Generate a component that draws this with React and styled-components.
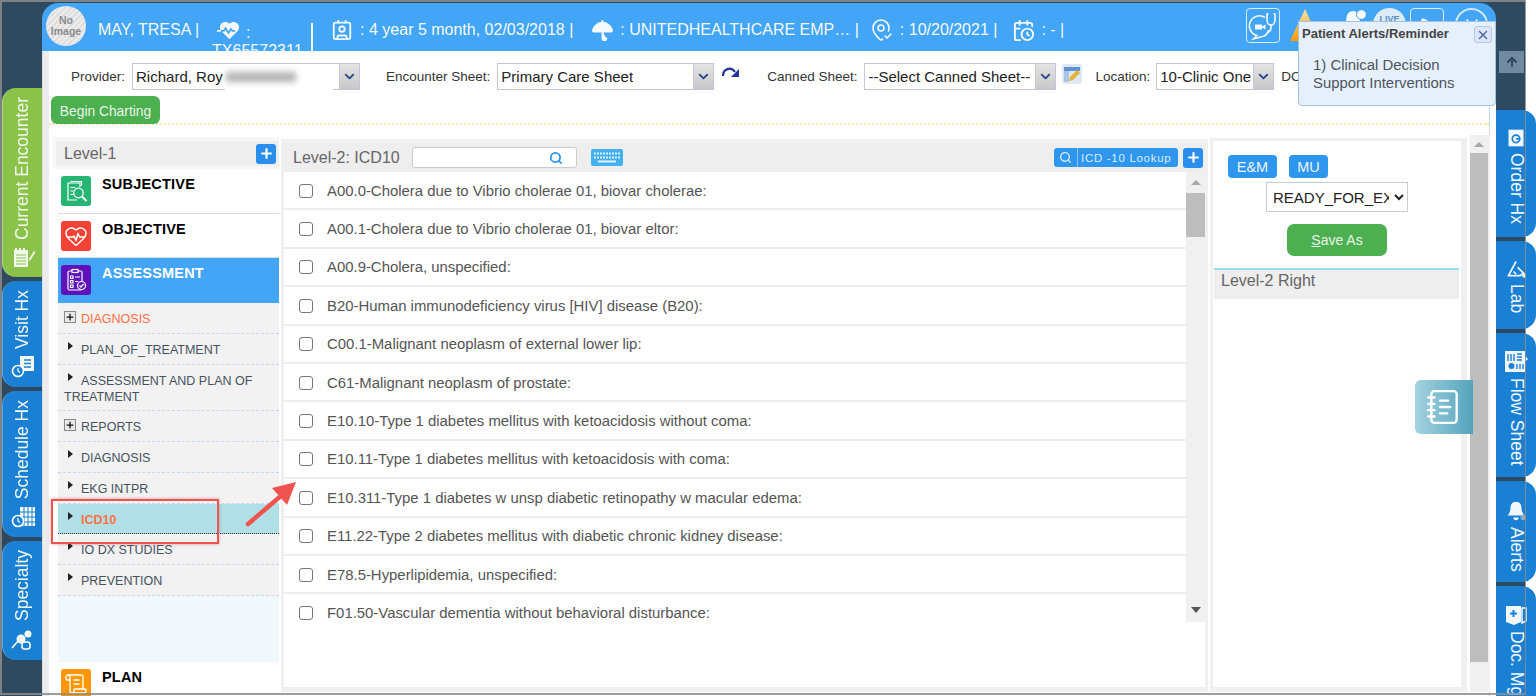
import React from 'react';
import styled, { createGlobalStyle } from 'styled-components';
import {
  HeartPulse, Umbrella, MapPinCheck, CalendarClock, Bell, Play, X, Search, Plus,
  ArrowUp, ChevronDown, ScrollText, Contact, NotebookText,
} from 'lucide-react';

const GlobalStyle = createGlobalStyle`
  html, body { margin: 0; padding: 0; height: 100%; overflow: hidden; background: #fff; }
  * { box-sizing: border-box; }
  body { font-family: "Liberation Sans", Arial, sans-serif; }
`;

const Page = styled.div`
  position: relative;
  display: flex;
  width: 1536px;
  height: 696px;
  overflow: hidden;
  background: linear-gradient(to right, #2e4a60 1525px, #fff 1525px);
`;

const Frame = styled.div`
  position: absolute;
  left: 0;
  top: 0;
  width: 1526px;
  height: 695px;
  border: 2px solid rgba(140, 140, 140, 0.85);
  border-right-width: 1px;
  pointer-events: none;
  z-index: 20;
`;

const LeftRail = styled.nav`
  width: 42px;
  flex: none;
  padding: 88px 0 0 2px;
  display: flex;
  flex-direction: column;
  gap: 4px;
`;

const LeftTab = styled.div`
  height: ${(p) => p.$h}px;
  display: flex;
  flex-direction: column;
  align-items: center;
  justify-content: center;
  gap: 5px;
  color: #f2f8ee;
  background: ${(p) => (p.$active ? '#8bc34a' : '#1a80d4')};
  border-radius: 14px 0 0 14px;
  border-left: 1px solid rgba(255, 255, 255, 0.3);
`;

const LeftLabel = styled.span`
  writing-mode: vertical-rl;
  transform: rotate(180deg);
  font-size: 17.5px;
  white-space: nowrap;
`;

const Main = styled.div`
  position: relative;
  width: 1454px;
  flex: none;
  margin-top: 3px;
  display: flex;
  flex-direction: column;
`;

const Header = styled.header`
  height: 48px;
  flex: none;
  display: flex;
  align-items: flex-start;
  padding: 3px 8px 0 4px;
  background: #42a5f5;
  color: #f4faff;
  border-radius: 16px 16px 0 0;
  overflow: hidden;
  font-size: 16px;
`;

const Avatar = styled.div`
  width: 40px;
  height: 40px;
  flex: none;
  border-radius: 50%;
  display: flex;
  align-items: center;
  justify-content: center;
  text-align: center;
  font-size: 10.5px;
  line-height: 11px;
  font-weight: bold;
  color: #8c8c8c;
  background: repeating-linear-gradient(135deg, #ececec 0 2px, #dedede 2px 4px);
`;

const HeaderText = styled.span`
  margin-left: ${(p) => p.$ml || 0}px;
  padding-top: 15px;
  line-height: 18px;
  white-space: nowrap;
`;

const HeaderIcon = styled.span`
  margin-left: ${(p) => p.$ml || 0}px;
  padding-top: ${(p) => p.$pt || 13}px;
  height: 40px;
  display: flex;
  flex: none;
`;

const PatientId = styled.span`
  width: 98px;
  margin-left: ${(p) => p.$ml}px;
  padding-top: 18px;
  line-height: 18px;
  flex: none;
`;

const IdColon = styled.span`
  margin-left: 34px;
`;

const TallBar = styled.span`
  width: 2px;
  height: 34px;
  margin: 17px 0 0 ${(p) => p.$ml}px;
  background: #f4faff;
  flex: none;
`;

const HeaderTools = styled.div`
  margin-left: auto;
  display: flex;
  align-items: flex-start;
`;

const ToolBox = styled.span`
  width: 34px;
  height: 35px;
  margin: 2px 0 0 ${(p) => p.$ml}px;
  display: flex;
  align-items: center;
  justify-content: center;
  flex: none;
  border: 1px solid #dceefd;
  border-radius: 4px;
`;

const ToolRound = styled.span`
  width: 33px;
  height: 33px;
  margin: 2px 0 0 ${(p) => p.$ml}px;
  display: flex;
  align-items: center;
  justify-content: center;
  flex: none;
  border-radius: 50%;
  border: 2px solid #cfe6fb;
`;

const LiveBadge = styled.span`
  width: 33px;
  height: 33px;
  margin: 2px 0 0 ${(p) => p.$ml}px;
  padding-top: 6px;
  flex: none;
  text-align: center;
  border-radius: 50%;
  font-size: 9px;
  line-height: 10px;
  font-weight: bold;
  color: #5b8fc0;
  background: #dcebf8;
`;

const BellGlyph = styled.span`
  position: relative;
  width: 23px;
  height: 24px;
  margin: 4px 0 0 22px;
  flex: none;
`;

const BellBadge = styled.span`
  position: absolute;
  right: -1px;
  top: 0;
  width: 9px;
  height: 9px;
  border-radius: 50%;
  background: #fff;
  outline: 1px solid #42a5f5;
`;

const Warning = styled.span`
  width: 30px;
  height: 32px;
  margin: 3px 0 0 10px;
  flex: none;
  clip-path: polygon(50% 0, 100% 100%, 0 100%);
  background: linear-gradient(#f5e3a8, #ff9800);
`;

const AlertPopup = styled.aside`
  position: absolute;
  left: 1256px;
  top: 18px;
  width: 198px;
  height: 85px;
  padding: 4px 3px;
  background: #e6f0fc;
  border: 1px solid #a6c2e2;
  border-radius: 0 0 4px 4px;
  color: #4d5560;
  z-index: 10;
`;

const PopupHead = styled.div`
  display: flex;
  align-items: flex-start;
  justify-content: space-between;
  font-size: 13px;
  font-weight: bold;
  color: #444;
  line-height: 15px;
`;

const PopupClose = styled.span`
  width: 18px;
  height: 17px;
  display: flex;
  align-items: center;
  justify-content: center;
  border: 1px solid #b5c8e6;
  border-radius: 3px;
  background: #dbe7f8;
  color: #5068a8;
`;

const PopupBody = styled.div`
  margin: 13px 0 0 11px;
  font-size: 14.9px;
  line-height: 18px;
`;

const UpButton = styled.span`
  position: absolute;
  left: 1457px;
  top: 48px;
  width: 25px;
  height: 22px;
  display: flex;
  align-items: center;
  justify-content: center;
  background: #728aa0;
  color: #2e4a60;
`;

const Body = styled.div`
  flex: 1;
  min-height: 0;
  display: flex;
  background: #fff;
`;

const Gutter = styled.div`
  width: 7px;
  flex: none;
  background: #ececec;
  border-left: 1px solid #ddd;
`;

const Workspace = styled.div`
  width: 1441px;
  flex: none;
  display: flex;
  flex-direction: column;
  border-right: 1px solid #c4d8ee;
`;

const Toolbar = styled.div`
  height: 74px;
  flex: none;
  padding: 0 0 0 2px;
  border-bottom: 2px dotted #fde6a6;
`;

const FilterRow = styled.div`
  display: flex;
  align-items: center;
  height: 27px;
  margin-top: 12px;
  margin-left: 20px;
`;

const FieldLabel = styled.label`
  font-size: 13.5px;
  color: #333;
  white-space: nowrap;
  margin-left: ${(p) => p.$ml || 0}px;
  margin-right: ${(p) => p.$mr || 7}px;
`;

const Combo = styled.div`
  position: relative;
  width: ${(p) => p.$w}px;
  height: 27px;
  flex: none;
  display: flex;
  align-items: center;
  justify-content: space-between;
  padding-left: 3px;
  font-size: 15px;
  color: #222;
  white-space: nowrap;
  border: 1px solid #c3c6d8;
  background: #fff;
`;

const ComboArrow = styled.span`
  width: 20px;
  height: 25px;
  flex: none;
  display: flex;
  align-items: center;
  justify-content: center;
  background: linear-gradient(#e4e4e4, #c8c8c8);
  border-left: 1px solid #c3c6d8;
  color: #26468c;
`;

const ComboValue = styled.span`
  overflow: hidden;
`;

const BlurMask = styled.span`
  position: absolute;
  left: 92px;
  top: 0;
  width: 108px;
  height: 34px;
  background: #fff;
`;

const BlurName = styled.span`
  display: block;
  width: 70px;
  height: 10px;
  margin: 8px 0 0 1px;
  background: #b4b4b4;
  filter: blur(3px);
`;

const ToolIcon = styled.span`
  display: flex;
  flex: none;
  margin: ${(p) => p.$mt}px 0 0 ${(p) => p.$ml}px;
`;

const BeginButton = styled.button`
  display: block;
  width: 109px;
  height: 28px;
  margin-top: 6px;
  padding: 2px 0 0;
  border: 0;
  border-radius: 6px;
  background: #4caf50;
  color: #e8f5e9;
  font: 13.8px "Liberation Sans", Arial, sans-serif;
`;

const PanelArea = styled.div`
  flex: 1;
  min-height: 0;
  display: flex;
`;

const Panels = styled.div`
  width: 1421px;
  flex: none;
  display: flex;
  padding: 12px 0 0 4px;
  overflow: hidden;
`;

const LevelOne = styled.section`
  width: 226px;
  flex: none;
  display: flex;
  flex-direction: column;
  overflow: hidden;
`;

const LevelOneHead = styled.div`
  height: 32px;
  flex: none;
  padding: 4px 0 3px 3px;
  background: #f6f6f6;
`;

const LevelOneBar = styled.div`
  height: 25px;
  display: flex;
  align-items: center;
  justify-content: space-between;
  padding: 0 3px 0 8px;
  background: #eee;
  font-size: 16px;
  color: #666;
`;

const PlusButton = styled.span`
  width: 20px;
  height: 20px;
  display: flex;
  align-items: center;
  justify-content: center;
  flex: none;
  margin-left: ${(p) => p.$ml || 0}px;
  border-radius: 3px;
  background: #2a8fec;
  color: #fff;
`;

const CategoryRow = styled.div`
  height: 44.5px;
  flex: none;
  display: flex;
  margin-left: 5px;
  padding: 7px 0 0 3px;
  font-size: 14.5px;
  font-weight: bold;
  letter-spacing: 0.2px;
  background: ${(p) => (p.$active ? '#42a5f5' : '#fff')};
  color: ${(p) => (p.$active ? '#fff' : '#000')};
  border-bottom: 1px solid ${(p) => (p.$active ? '#42a5f5' : '#ddd')};
`;

const CategoryTile = styled.span`
  width: 30px;
  height: 30px;
  flex: none;
  display: flex;
  align-items: center;
  justify-content: center;
  border-radius: 3px;
  color: #fff;
  background: ${(p) => p.$bg};
`;

const CategoryName = styled.span`
  margin-left: 11px;
`;

const SubList = styled.ul`
  list-style: none;
  margin: 0 0 0 5px;
  padding: 0;
  background: #f2f2f2;
`;

const SubItem = styled.li`
  min-height: ${(p) => (p.$selected ? 30 : 31)}px;
  padding: 8px 6px 5px;
  font-size: 12.5px;
  line-height: 16px;
  color: ${(p) => (p.$orange ? '#ff7043' : '#47525e')};
  font-weight: ${(p) => (p.$selected ? 'bold' : 'normal')};
  background: ${(p) => (p.$selected ? '#b0e0e6' : 'transparent')};
  border-bottom: 1px ${(p) => (p.$selected ? 'dotted #333' : 'dashed #c9d8ea')};
`;

const Caret = styled.span`
  display: inline-block;
  width: 0;
  height: 0;
  margin: 0 8px 4px 4px;
  border-top: 4px solid transparent;
  border-bottom: 4px solid transparent;
  border-left: 5px solid #222;
`;

const Expander = styled.span`
  display: inline-flex;
  align-items: center;
  justify-content: center;
  width: 12px;
  height: 12px;
  margin-right: 5px;
  vertical-align: 1px;
  border: 1px solid #888;
  background: #e8e8e8;
  color: #111;
`;

const SubFill = styled.div`
  height: 66px;
  flex: none;
  margin-left: 5px;
  background: #f0f8fb;
`;

const LevelTwo = styled.section`
  width: 927px;
  flex: none;
  margin: 2px 0 4px 2px;
  border: solid #f0f0f0;
  border-width: 4px 3px 5px;
  display: flex;
  flex-direction: column;
`;

const LevelTwoHead = styled.div`
  height: 29px;
  flex: none;
  display: flex;
  align-items: center;
  padding: 0 2px 0 9px;
  background: #eee;
  font-size: 16px;
  color: #666;
`;

const SearchField = styled.div`
  width: 165px;
  height: 21px;
  margin-left: 12px;
  display: flex;
  align-items: center;
  justify-content: flex-end;
  padding-right: 13px;
  background: #fff;
  border: 1px solid #ccc;
  border-radius: 3px;
  color: #2a96ee;
`;

const KeyboardChip = styled.span`
  display: flex;
  margin-left: 14px;
`;

const LookupButton = styled.div`
  width: 124px;
  height: 19px;
  margin-left: auto;
  display: flex;
  align-items: center;
  border-radius: 3px;
  background: #2f96ee;
  color: #d9edff;
  font-size: 11.5px;
  letter-spacing: 0.7px;
`;

const LookupIcon = styled.span`
  width: 24px;
  height: 19px;
  flex: none;
  display: flex;
  align-items: center;
  justify-content: center;
  border-right: 1px solid #8cc6f5;
  margin-right: 3px;
`;

const ListArea = styled.div`
  height: 450px;
  flex: none;
  display: flex;
`;

const CodeList = styled.div`
  flex: 1;
  min-width: 0;
  overflow: hidden;
`;

const CodeRow = styled.label`
  height: 38.4px;
  display: flex;
  align-items: center;
  padding: 1px 0 0 15px;
  font-size: 14.9px;
  color: #555;
  border-bottom: 2px solid #eee;
`;

const CodeBox = styled.span`
  width: 14px;
  height: 14px;
  flex: none;
  margin-right: 14px;
  border: 1px solid #767676;
  border-radius: 3px;
  background: #fff;
`;

const Track = styled.div`
  width: ${(p) => p.$w}px;
  flex: none;
  display: flex;
  flex-direction: column;
  align-items: center;
  background: #f0f0f0;
  margin-top: ${(p) => p.$mt || 0}px;
  margin-bottom: ${(p) => p.$mb || 0}px;
  padding-right: ${(p) => p.$pr || 0}px;
`;

const TrackArrow = styled.span`
  width: 0;
  height: 0;
  flex: none;
  margin: ${(p) => (p.$up ? '8px 0 8px' : 'auto 0 9px')};
  border-left: 5px solid transparent;
  border-right: 5px solid transparent;
  border-bottom: ${(p) => (p.$up ? '5px solid #a8a8a8' : '0')};
  border-top: ${(p) => (p.$up ? '0' : '6px solid #555')};
`;

const OuterArrow = styled(TrackArrow)`
  margin: 7px 0 6px;
`;

const Thumb = styled.span`
  width: 100%;
  height: ${(p) => p.$h}px;
  flex: none;
  background: #bdbdbd;
`;

const LevelRight = styled.section`
  width: 257px;
  flex: none;
  margin: 1px 0 4px 2px;
  border: solid #f0f0f0;
  border-width: 3px 6px 5px 3px;
  display: flex;
  flex-direction: column;
  background: #fff;
`;

const ChipRow = styled.div`
  display: flex;
  gap: 12px;
  padding: 14px 0 0 15px;
`;

const Chip = styled.span`
  width: ${(p) => p.$w}px;
  height: 23px;
  display: flex;
  align-items: center;
  justify-content: center;
  border-radius: 4px;
  background: #2f96ee;
  color: #eaf5ff;
  font-size: 14.5px;
`;

const StatusSelect = styled.select`
  display: block;
  width: 142px;
  height: 30px;
  margin: 4px 0 0 53px;
  padding: 0 2px;
  border: 1px solid #ccc;
  background: #fff;
  color: #222;
  font: 15px "Liberation Sans", Arial, sans-serif;
`;

const SaveButton = styled.button`
  display: block;
  width: 100px;
  height: 32px;
  margin: 12px 0 12px 74px;
  border: 0;
  border-radius: 7px;
  background: #4caf50;
  color: #e8f5e9;
  font: 14px "Liberation Sans", Arial, sans-serif;
`;

const RightHead = styled.div`
  height: 31px;
  width: 245px;
  margin-left: 1px;
  padding: 2px 0 0 7px;
  background: #eee;
  border-top: 2px solid #9fdfe6;
  font-size: 16px;
  color: #666;
`;

const NotesFlag = styled.span`
  position: absolute;
  left: 1415px;
  top: 380px;
  width: 58px;
  height: 54px;
  display: flex;
  align-items: center;
  justify-content: center;
  border-radius: 6px 0 0 6px;
  background: linear-gradient(to right, #a3d2e0, #54a4bc);
  color: #fff;
  z-index: 5;
`;

const RightRail = styled.nav`
  width: 40px;
  flex: none;
  padding-top: 110px;
  display: flex;
  flex-direction: column;
  gap: 4px;
`;

const RightTab = styled.div`
  height: ${(p) => p.$h}px;
  flex: none;
  display: flex;
  flex-direction: column;
  align-items: center;
  padding-top: ${(p) => p.$pt}px;
  gap: 5px;
  color: #f0f7fd;
  background: #1a80d4;
  border-radius: 0 14px 14px 0;
`;

const RightLabel = styled.span`
  writing-mode: vertical-rl;
  font-size: 17.5px;
  white-space: nowrap;
`;

const RedBox = styled.div`
  position: absolute;
  left: 51px;
  top: 499px;
  width: 168px;
  height: 45px;
  border: 2px solid #ef5350;
  box-shadow: 0 0 3px rgba(180, 60, 60, 0.5);
  z-index: 6;
`;

const RedArrow = styled.svg`
  position: absolute;
  left: 240px;
  top: 475px;
  z-index: 6;
`;

// filled pictograms of the side tabs, lucide has none that look like these
const Glyph = ({ size = 24, children }) => (
  <svg width={size} height={size} viewBox="0 0 24 24" fill="currentColor" stroke="none">
    {children}
  </svg>
);

const EncounterIcon = () => (
  <Glyph>
    <path d="M3 5h14v17H3z" />
    <path d="M4 3h2v4H4zM8 3h2v4H8zM12 3h2v4h-2z" />
    <path d="M5 10h10M5 13h10M5 16h10M5 19h10" stroke="#8bc34a" strokeWidth="1.2" />
    <path d="M18 14l5-8 1.5 1-5 8-2 1.5z" />
  </Glyph>
);

const VisitIcon = () => (
  <Glyph>
    <path d="M9 2h14v15H9z" />
    <path d="M13 6h7M13 9.5h7M13 13h7" stroke="#1a80d4" strokeWidth="1.5" />
    <circle cx="7" cy="17" r="5.5" fill="#1a80d4" stroke="#fff" strokeWidth="1.6" />
    <path d="M7 14v3l2 1.5" fill="none" stroke="#fff" strokeWidth="1.2" />
  </Glyph>
);

const ScheduleIcon = () => (
  <Glyph>
    <path d="M9 3h15v19H9z" />
    <path d="M13 3v19M17 3v19M21 3v19M9 8h15M9 13h15M9 18h15" stroke="#1a80d4" strokeWidth="1" />
    <circle cx="7" cy="17" r="5.5" fill="#1a80d4" stroke="#fff" strokeWidth="1.6" />
    <path d="M7 14v3l2 1.5" fill="none" stroke="#fff" strokeWidth="1.2" />
  </Glyph>
);

const SpecialtyIcon = () => (
  <Glyph>
    <circle cx="10" cy="12" r="4.5" />
    <circle cx="17" cy="7" r="3.5" />
    <rect x="11" y="15" width="8" height="7" rx="2.5" fill="none" stroke="#fff" strokeWidth="1.5" />
    <path d="M7 14L1 21" fill="none" stroke="#fff" strokeWidth="1.5" />
  </Glyph>
);

const OrderIcon = () => (
  <Glyph size={20}>
    <path d="M3 2h18v20H3z" />
    <circle cx="12" cy="13" r="4.5" fill="none" stroke="#1a80d4" strokeWidth="2" />
    <path d="M12 13h5" stroke="#1a80d4" strokeWidth="2" />
  </Glyph>
);

const LabIcon = () => (
  <svg width="20" height="20" viewBox="0 0 24 24" fill="none" stroke="currentColor" strokeWidth="2">
    <path d="M12 3L3 20h14l4-3-7-7" />
    <path d="M9 15l3 3" />
    <circle cx="22" cy="20" r="1.5" fill="currentColor" />
  </svg>
);

const FlowIcon = () => (
  <Glyph>
    <path d="M1 2h20v21H1z" />
    <path d="M4 5v7M7 5v7M10 5v7M13 5h5M13 8h5M13 11h5M13 15v5M16 15v5M19 15v5" stroke="#1a80d4" strokeWidth="1.4" />
    <circle cx="7.5" cy="17" r="3" fill="#1a80d4" />
    <path d="M21 7l3 3-3 3z" />
  </Glyph>
);

const AlertsIcon = () => (
  <Glyph size={22}>
    <path d="M12 2c4 0 6 3 6 7 0 4 2 6 3 8H3c1-2 3-4 3-8 0-4 2-7 6-7z" />
    <path d="M9 19h6c0 2-1.5 3-3 3s-3-1-3-3z" />
    <circle cx="20" cy="19" r="3" fill="#8fa9c2" />
  </Glyph>
);

const DocMgmtIcon = () => (
  <Glyph>
    <path d="M2 4h15v16l-7 3-8-3z" />
    <path d="M9.5 8v7M6 11.5h7" stroke="#1a80d4" strokeWidth="2" />
    <path d="M18 6h4v13l-4 2z" fill="none" stroke="#fff" strokeWidth="1.4" />
  </Glyph>
);

const PulseHeart = () => (
  <svg width="23" height="23" viewBox="0 0 24 24">
    <path
      d="M20 14c1.5-1.5 3-3.3 3-5.500A5.500 5.500 0 0 0 17.500 3c-1.800 0-3 .5-4.500 2-1.500-1.500-2.700-2-4.500-2A5.500 5.500 0 0 0 3 8.500c0 2.200 1.500 4 3 5.500l7 7Z"
      fill="#f4faff"
    />
    <path d="M0 12.500h7l2-3 3 5 2.500-4 1.500 2h3" fill="none" stroke="#42a5f5" strokeWidth="1.800" />
    <path d="M0 12.500h4" fill="none" stroke="#f4faff" strokeWidth="1.800" />
  </svg>
);

const TeleVisitIcon = () => (
  <svg width="30" height="30" viewBox="0 0 30 30" fill="none" stroke="#f4faff" strokeWidth="1.600">
    <path d="M17 6.500A10 10 0 1 0 9 24.500L5.500 28l7-2A10 10 0 0 0 21 19" />
    <path d="M20.500 3H19v6c0 3 2 5 4 5s4-2 4-5V3h-1.500" />
    <path d="M23 14v3c0 2.500-1.500 4-4 4" />
    <path d="M7 13.500h7v5H7zM14 15.500l3.500-2v5l-3.500-2z" fill="#f4faff" stroke="none" />
  </svg>
);

const CurvedRedo = () => (
  <svg width="18" height="12" viewBox="0 0 18 12">
    <path d="M1 10C1 3 9 0 13 6" fill="none" stroke="#26339a" strokeWidth="2.200" />
    <path d="M17 3v8h-8z" fill="#26339a" />
  </svg>
);

const SheetEditIcon = () => (
  <svg width="20" height="20" viewBox="0 0 20 20">
    <rect width="20" height="20" rx="3" fill="#dfe7f2" />
    <rect x="2" y="3" width="16" height="4" fill="#5f93cf" />
    <rect x="2" y="7" width="5" height="11" fill="#a9c4e4" />
    <path d="M7 17l1-4 7-7 3 3-7 7z" fill="#e3b23c" />
  </svg>
);

const KeyboardIcon = () => (
  <svg width="32" height="17" viewBox="0 0 32 17">
    <rect width="32" height="17" rx="2" fill="#45b0f0" />
    <path d="M3 4.500h26M3 8.500h26" stroke="#d6f0fd" strokeWidth="2.200" strokeDasharray="2 1" />
    <path d="M7 12.500h18" stroke="#d6f0fd" strokeWidth="2.200" />
  </svg>
);

const SubjectiveIcon = () => (
  <svg width="24" height="24" viewBox="0 0 24 24" fill="none" stroke="currentColor" strokeWidth="1.200">
    <path d="M13 21H4V4h12v4" />
    <path d="M6.500 2.500h11v4M6.500 8.500h5M6.500 12h3M6.500 15.500h3" />
    <circle cx="14.500" cy="14" r="4.800" />
    <path d="M18 17.500l4.500 4.500" strokeWidth="2" />
  </svg>
);

const AssessmentIcon = () => (
  <svg width="24" height="24" viewBox="0 0 24 24" fill="none" stroke="currentColor" strokeWidth="1.200">
    <rect x="4" y="3" width="14" height="19" rx="1.500" />
    <rect x="8" y="1.500" width="6" height="3" fill="#5e12ba" />
    <path d="M6.500 8h2.500v2.500H6.500zM6.500 12.500h2.500V15H6.500zM6.500 17h2.500v2.500H6.500zM11 9h5M11 13.500h3" />
    <circle cx="17.500" cy="17.500" r="4" fill="#5e12ba" />
    <path d="M15.500 17.500l1.500 1.500 2.500-3" />
  </svg>
);

const codes = [
  'A00.0-Cholera due to Vibrio cholerae 01, biovar cholerae:',
  'A00.1-Cholera due to Vibrio cholerae 01, biovar eltor:',
  'A00.9-Cholera, unspecified:',
  'B20-Human immunodeficiency virus [HIV] disease (B20):',
  'C00.1-Malignant neoplasm of external lower lip:',
  'C61-Malignant neoplasm of prostate:',
  'E10.10-Type 1 diabetes mellitus with ketoacidosis without coma:',
  'E10.11-Type 1 diabetes mellitus with ketoacidosis with coma:',
  'E10.311-Type 1 diabetes w unsp diabetic retinopathy w macular edema:',
  'E11.22-Type 2 diabetes mellitus with diabetic chronic kidney disease:',
  'E78.5-Hyperlipidemia, unspecified:',
  'F01.50-Vascular dementia without behavioral disturbance:',
];

const subItems = [
  { label: 'DIAGNOSIS', expand: true, orange: true },
  { label: 'PLAN_OF_TREATMENT' },
  { label: 'ASSESSMENT AND PLAN OF TREATMENT' },
  { label: 'REPORTS', expand: true },
  { label: 'DIAGNOSIS' },
  { label: 'EKG INTPR' },
  { label: 'ICD10', orange: true, selected: true },
  { label: 'IO DX STUDIES' },
  { label: 'PREVENTION' },
];

const leftTabs = [
  { label: 'Current Encounter', h: 189, Icon: EncounterIcon, active: true },
  { label: 'Visit Hx', h: 106, Icon: VisitIcon },
  { label: 'Schedule Hx', h: 146, Icon: ScheduleIcon },
  { label: 'Specialty', h: 119, Icon: SpecialtyIcon },
];

const rightTabs = [
  { label: 'Order Hx', h: 127, pt: 18, Icon: OrderIcon },
  { label: 'Lab', h: 88, pt: 18, Icon: LabIcon },
  { label: 'Flow Sheet', h: 144, pt: 16, Icon: FlowIcon },
  { label: 'Alerts', h: 101, pt: 19, Icon: AlertsIcon },
  { label: 'Doc. Mgmt', h: 130, pt: 16, Icon: DocMgmtIcon },
];

function DropDown({ width, value, children }) {
  return (
    <Combo $w={width}>
      <ComboValue>{value}</ComboValue>
      <ComboArrow><ChevronDown size={15} strokeWidth={3} /></ComboArrow>
      {children}
    </Combo>
  );
}

export default function App() {
  return (
    <Page>
      <GlobalStyle />
      <LeftRail>
        {leftTabs.map(({ label, h, Icon, active }) => (
          <LeftTab key={label} $h={h} $active={active}>
            <LeftLabel>{label}</LeftLabel>
            <Icon />
          </LeftTab>
        ))}
      </LeftRail>

      <Main>
        <Header>
          <Avatar>No<br />Image</Avatar>
          <HeaderText $ml={12}>MAY, TRESA |</HeaderText>
          <HeaderIcon $ml={18}><PulseHeart /></HeaderIcon>
          <PatientId $ml={-28}>
            <IdColon>:</IdColon><br />TX65572311
          </PatientId>
          <TallBar $ml={1} />
          <HeaderIcon $ml={18}><Contact size={22} /></HeaderIcon>
          <HeaderText $ml={7}>: 4 year 5 month, 02/03/2018 |</HeaderText>
          <HeaderIcon $ml={18}><Umbrella size={23} fill="#f4faff" /></HeaderIcon>
          <HeaderText $ml={6}>: UNITEDHEALTHCARE EMP… |</HeaderText>
          <HeaderIcon $ml={10} $pt={12}><MapPinCheck size={24} strokeWidth={1.6} /></HeaderIcon>
          <HeaderText $ml={7}>: 10/20/2021 |</HeaderText>
          <HeaderIcon $ml={15}><CalendarClock size={23} /></HeaderIcon>
          <HeaderText $ml={6}>: - |</HeaderText>
          <HeaderTools>
            <ToolBox $ml={0}><TeleVisitIcon /></ToolBox>
            <Warning />
            <BellGlyph>
              <Bell size={22} fill="#f4faff" />
              <BellBadge />
            </BellGlyph>
            <LiveBadge $ml={8}>LIVE</LiveBadge>
            <ToolBox $ml={4}><Play size={18} fill="#f4faff" /></ToolBox>
            <ToolRound $ml={11}><X size={20} /></ToolRound>
          </HeaderTools>
        </Header>

        <AlertPopup>
          <PopupHead>
            Patient Alerts/Reminder
            <PopupClose><X size={14} strokeWidth={2.5} /></PopupClose>
          </PopupHead>
          <PopupBody>1) Clinical Decision<br />Support Interventions</PopupBody>
        </AlertPopup>
        <UpButton><ArrowUp size={14} strokeWidth={3.5} /></UpButton>

        <Body>
          <Gutter />
          <Workspace>
            <Toolbar>
              <FilterRow>
                <FieldLabel>Provider:</FieldLabel>
                <DropDown width={228} value="Richard, Roy">
                  <BlurMask><BlurName /></BlurMask>
                </DropDown>
                <FieldLabel $ml={26}>Encounter Sheet:</FieldLabel>
                <DropDown width={217} value="Primary Care Sheet" />
                <ToolIcon $ml={8} $mt={-10}><CurvedRedo /></ToolIcon>
                <FieldLabel $ml={27}>Canned Sheet:</FieldLabel>
                <DropDown width={192} value="--Select Canned Sheet--" />
                <ToolIcon $ml={6} $mt={-6}><SheetEditIcon /></ToolIcon>
                <FieldLabel $ml={13} $mr={6}>Location:</FieldLabel>
                <DropDown width={118} value="10-Clinic One" />
                <FieldLabel $ml={7}>DOS:</FieldLabel>
              </FilterRow>
              <BeginButton>Begin Charting</BeginButton>
            </Toolbar>

            <PanelArea>
              <Panels>
                <LevelOne>
                  <LevelOneHead>
                    <LevelOneBar>
                      Level-1
                      <PlusButton><Plus size={15} strokeWidth={3.5} /></PlusButton>
                    </LevelOneBar>
                  </LevelOneHead>
                  <CategoryRow>
                    <CategoryTile $bg="#26b573"><SubjectiveIcon /></CategoryTile>
                    <CategoryName>SUBJECTIVE</CategoryName>
                  </CategoryRow>
                  <CategoryRow>
                    <CategoryTile $bg="#f44336"><HeartPulse size={24} strokeWidth={1.5} /></CategoryTile>
                    <CategoryName>OBJECTIVE</CategoryName>
                  </CategoryRow>
                  <CategoryRow $active>
                    <CategoryTile $bg="#5e12ba"><AssessmentIcon /></CategoryTile>
                    <CategoryName>ASSESSMENT</CategoryName>
                  </CategoryRow>
                  <SubList>
                    {subItems.map((item, i) => (
                      <SubItem key={i} $orange={item.orange} $selected={item.selected}>
                        {item.expand
                          ? <Expander><Plus size={10} strokeWidth={3} /></Expander>
                          : <Caret />}
                        {item.label}
                      </SubItem>
                    ))}
                  </SubList>
                  <SubFill />
                  <CategoryRow>
                    <CategoryTile $bg="#ff9800"><ScrollText size={24} strokeWidth={1.3} /></CategoryTile>
                    <CategoryName>PLAN</CategoryName>
                  </CategoryRow>
                </LevelOne>

                <LevelTwo>
                  <LevelTwoHead>
                    Level-2: ICD10
                    <SearchField><Search size={14} strokeWidth={3} /></SearchField>
                    <KeyboardChip><KeyboardIcon /></KeyboardChip>
                    <LookupButton>
                      <LookupIcon><Search size={13} strokeWidth={2.5} /></LookupIcon>
                      ICD -10 Lookup
                    </LookupButton>
                    <PlusButton $ml={5}><Plus size={15} strokeWidth={3.5} /></PlusButton>
                  </LevelTwoHead>
                  <ListArea>
                    <CodeList>
                      {codes.map((code) => (
                        <CodeRow key={code}>
                          <CodeBox />
                          {code}
                        </CodeRow>
                      ))}
                    </CodeList>
                    <Track $w={19}>
                      <TrackArrow $up />
                      <Thumb $h={44} />
                      <TrackArrow />
                    </Track>
                  </ListArea>
                </LevelTwo>

                <LevelRight>
                  <ChipRow>
                    <Chip $w={49}>E&amp;M</Chip>
                    <Chip $w={39}>MU</Chip>
                  </ChipRow>
                  <StatusSelect defaultValue="ready">
                    <option value="ready">READY_FOR_EXAM</option>
                  </StatusSelect>
                  <SaveButton><u>S</u>ave As</SaveButton>
                  <RightHead>Level-2 Right</RightHead>
                </LevelRight>
              </Panels>
              <Track $w={20} $mt={10} $mb={4} $pr={2}>
                <OuterArrow $up />
                <Thumb $h={509} />
              </Track>
            </PanelArea>
          </Workspace>
        </Body>
      </Main>

      <RightRail>
        {rightTabs.map(({ label, h, pt, Icon }) => (
          <RightTab key={label} $h={h} $pt={pt}>
            <Icon />
            <RightLabel>{label}</RightLabel>
          </RightTab>
        ))}
      </RightRail>

      <NotesFlag><NotebookText size={38} strokeWidth={1.5} /></NotesFlag>
      <RedBox />
      <RedArrow width="60" height="56" viewBox="0 0 60 56">
        <path d="M8 49 L42 20" stroke="#ef5350" strokeWidth="4.5" strokeLinecap="round" />
        <path d="M56 7 L32 13 L47 30 Z" fill="#ef5350" />
      </RedArrow>
      <Frame />
    </Page>
  );
}
